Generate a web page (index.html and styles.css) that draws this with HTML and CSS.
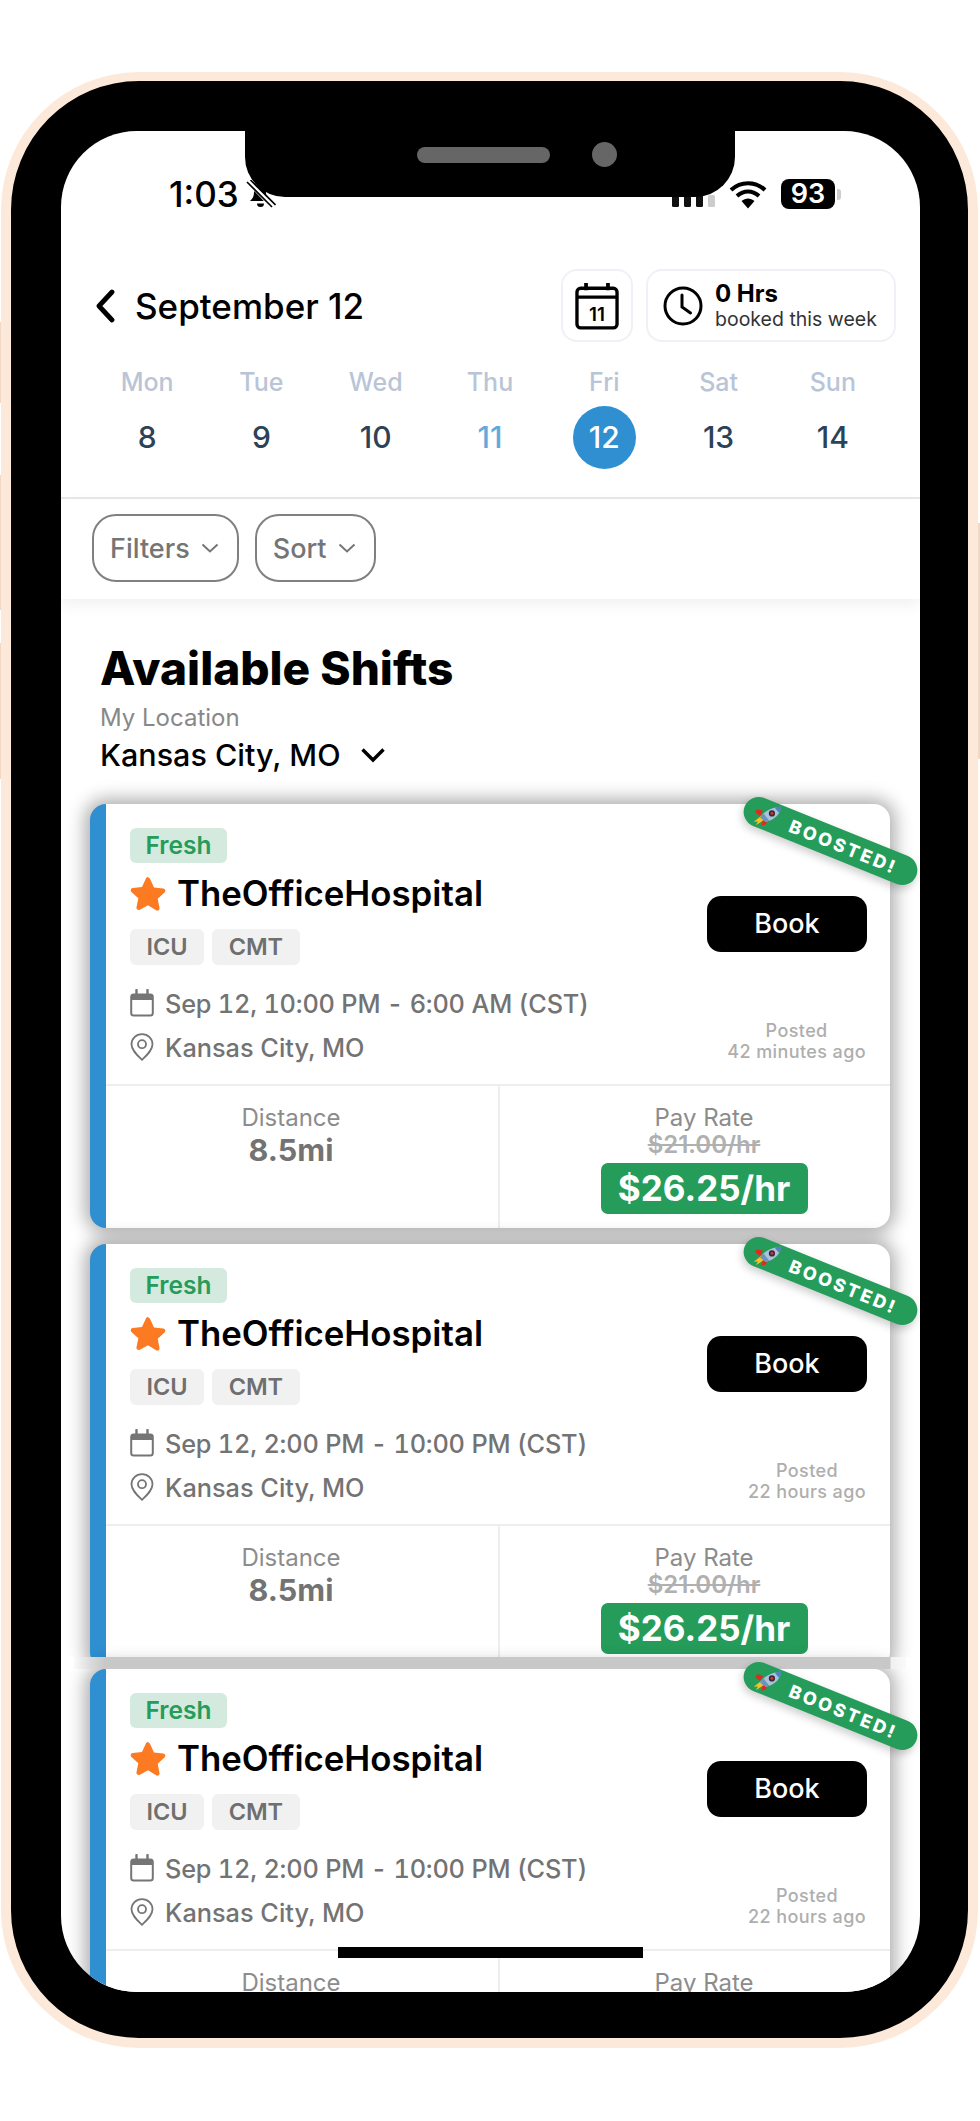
FILE: index.html
```html
<!DOCTYPE html>
<html lang="en">
<head>
    <meta charset="UTF-8">
    <meta name="viewport" content="width=device-width, initial-scale=1.0">
    <title>Available Shifts</title>
    <link rel="stylesheet" href="styles.css">
</head>
<body>
    <!-- shared icons -->
    <svg class="icon-sprites" width="0" height="0">
        <symbol id="i-star" viewBox="0 0 36 36">
            <path d="M18 2.500c1 0 1.700.6 2.100 1.500l3.900 8.500 9.200 1.100c2.100.3 2.800 2.500 1.300 3.900l-6.800 6.300 1.800 9.100c.4 2-1.600 3.400-3.400 2.400L18 30.200l-8.100 4.500c-1.800 1-3.800-.4-3.400-2.400l1.800-9.100-6.800-6.300c-1.500-1.400-.8-3.600 1.300-3.900l9.200-1.100 3.900-8.500c.4-.9 1.100-1.500 2.100-1.500z" fill="#fb7a22"/>
        </symbol>
        <symbol id="i-date" viewBox="0 0 24 28">
            <path d="M2 5.500h20a1 1 0 0 1 1 1V11H1V6.500a1 1 0 0 1 1-1z" fill="#757575"/>
            <rect x="1.200" y="5.500" width="21.600" height="21" rx="2.500" fill="none" stroke="#757575" stroke-width="2"/>
            <path d="M6.500 1v6M17.500 1v6" stroke="#757575" stroke-width="2.400" stroke-linecap="round"/>
        </symbol>
        <symbol id="i-pin" viewBox="0 0 24 28">
            <path d="M12 1.200C6 1.200 1.500 5.700 1.500 11.300c0 6 5.600 10.800 10.500 15.500 4.900-4.700 10.500-9.500 10.500-15.500C22.500 5.700 18 1.200 12 1.200z" fill="none" stroke="#757575" stroke-width="1.800" stroke-linejoin="round"/>
            <circle cx="12" cy="11.200" r="4" fill="none" stroke="#757575" stroke-width="1.800"/>
        </symbol>
        <symbol id="i-rocket" viewBox="0 0 28 20">
            <path d="M8 10 1 15.500l4-.3L3 19l7.500-5z" fill="#f6c026"/>
            <path d="M10 5 4 3.500 2.500 6.500 7 10zM14 13l-1 5-4.500 1.500 1-5z" fill="#e5281d"/>
            <path d="M7 11.500C11 5.500 18 1.500 27.500 1c-1 8-7.500 13-15 14.500z" fill="#a9c3dc"/>
            <path d="M21 1.800c2.200-.5 4.400-.8 6.500-.8-.2 2.200-.9 4.300-2 6.100z" fill="#4f82c0"/>
            <path d="M7 11.500c1-1.500 2.100-2.800 3.400-4l5.500 7C14.500 15 13.500 15.300 12.500 15.500z" fill="#6d93bd"/>
            <circle cx="18.500" cy="7.500" r="3" fill="#3a2a35"/>
            <circle cx="18.500" cy="7.500" r="1.400" fill="#d8323a"/>
        </symbol>
    </svg>

    <div class="phone">
        <span class="side-btn left-btn mute-btn"></span>
        <span class="side-btn left-btn vol-up-btn"></span>
        <span class="side-btn left-btn vol-down-btn"></span>
        <span class="side-btn power-btn"></span>

        <div class="screen">
            <div class="notch">
                <span class="speaker"></span>
                <span class="camera"></span>
            </div>

            <div class="status-bar">
                <div class="status-left">
                    <span class="clock">1:03</span>
                    <svg class="bell" width="30" height="28" viewBox="0 0 30 28">
                        <path d="M14 5c-4 0-6 3-6 7 0 4-1 6-4 9h20c-3-3-4-5-4-9 0-4-2-7-6-7z" fill="#000"/>
                        <path d="M11 23.500a3.500 3.500 0 0 0 7 0z" fill="#000"/>
                        <path d="M2 1l25 26" stroke="#fff" stroke-width="5"/>
                        <path d="M1 2l25 25M4.500 0l25 25" stroke="#000" stroke-width="1.600"/>
                    </svg>
                </div>
                <div class="status-right">
                    <svg class="signal" width="43" height="12" viewBox="0 0 43 12">
                        <rect x="0" y="0" width="7" height="12" rx="1.500" fill="#111"/>
                        <rect x="12" y="0" width="7" height="12" rx="1.500" fill="#111"/>
                        <rect x="24" y="0" width="7" height="12" rx="1.500" fill="#111"/>
                        <rect x="36" y="0" width="7" height="12" rx="1.500" fill="#ccc"/>
                    </svg>
                    <svg class="wifi" width="38" height="29" viewBox="0 0 38 29">
                        <path d="M2 10c10-9 24-9 34 0M8 16c7-6 15-6 22 0" fill="none" stroke="#000" stroke-width="4.200"/>
                        <path d="M12.500 21c4-3.400 9-3.400 13 0L19 28.500z" fill="#000"/>
                    </svg>
                    <div class="battery">
                        <span class="battery-level">93</span>
                        <span class="battery-nub"></span>
                    </div>
                </div>
            </div>

            <div class="top-bar">
                <div class="top-title">
                    <svg class="back" width="20" height="34" viewBox="0 0 20 34">
                        <path d="M17 3 4 17l13 14" fill="none" stroke="#000" stroke-width="4.800" stroke-linecap="round" stroke-linejoin="round"/>
                    </svg>
                    <span>September 12</span>
                </div>
                <div class="calendar-btn">
                    <svg width="44" height="48" viewBox="0 0 42 46">
                        <rect x="1.800" y="6" width="38.400" height="38" rx="3.500" fill="none" stroke="#000" stroke-width="3.200"/>
                        <path d="M1.800 14.500h38.400" stroke="#000" stroke-width="3"/>
                        <path d="M10.500 1v7M31.500 1v7" stroke="#000" stroke-width="3.600"/>
                        <text x="21" y="37" class="calendar-day">11</text>
                    </svg>
                </div>
                <div class="hours-btn">
                    <svg width="40" height="40" viewBox="0 0 40 40">
                        <circle cx="20" cy="20" r="18" fill="none" stroke="#000" stroke-width="3"/>
                        <path d="M19 9v12l8.500 6" fill="none" stroke="#000" stroke-width="3" stroke-linecap="round"/>
                    </svg>
                    <div class="hours-text">
                        <strong>0 Hrs</strong>
                        <span>booked this week</span>
                    </div>
                </div>
            </div>

            <div class="week">
                <div class="day"><span class="day-name">Mon</span><span class="day-num">8</span></div>
                <div class="day"><span class="day-name">Tue</span><span class="day-num">9</span></div>
                <div class="day"><span class="day-name">Wed</span><span class="day-num">10</span></div>
                <div class="day"><span class="day-name">Thu</span><span class="day-num today">11</span></div>
                <div class="day"><span class="day-name">Fri</span><span class="day-num selected">12</span></div>
                <div class="day"><span class="day-name">Sat</span><span class="day-num">13</span></div>
                <div class="day"><span class="day-name">Sun</span><span class="day-num">14</span></div>
            </div>

            <div class="filter-bar">
                <div class="filter-btn">Filters
                    <svg width="18" height="10" viewBox="0 0 18 10"><path d="M1.500 1.500 9 8.500l7.500-7" fill="none" stroke="#757575" stroke-width="2"/></svg>
                </div>
                <div class="filter-btn">Sort
                    <svg width="18" height="10" viewBox="0 0 18 10"><path d="M1.500 1.500 9 8.500l7.500-7" fill="none" stroke="#757575" stroke-width="2"/></svg>
                </div>
            </div>

            <div class="list-head">
                <h1>Available Shifts</h1>
                <div class="loc-label">My Location</div>
                <div class="loc-value">Kansas City, MO
                    <svg width="26" height="16" viewBox="0 0 26 16"><path d="M2.500 2.500 13 13 23.500 2.500" fill="none" stroke="#000" stroke-width="3.400"/></svg>
                </div>
            </div>

            <div class="shift-list">
                <div class="shift-card">
                    <div class="boosted">
                        <svg width="29" height="21"><use href="#i-rocket"/></svg>
                        <span>BOOSTED!</span>
                    </div>
                    <div class="card-top">
                        <div class="card-info">
                            <span class="fresh">Fresh</span>
                            <div class="facility">
                                <svg width="36" height="36"><use href="#i-star"/></svg>
                                <span>TheOfficeHospital</span>
                            </div>
                            <div class="tags"><span class="tag">ICU</span><span class="tag">CMT</span></div>
                            <div class="meta">
                                <svg width="24" height="28"><use href="#i-date"/></svg>
                                <span class="shift-time">Sep 12, 10:00 PM - 6:00 AM (CST)</span>
                            </div>
                            <div class="meta">
                                <svg width="24" height="28"><use href="#i-pin"/></svg>
                                <span>Kansas City, MO</span>
                            </div>
                        </div>
                        <div class="card-side">
                            <div class="book">Book</div>
                            <div class="posted">Posted<br>42 minutes ago</div>
                        </div>
                    </div>
                    <div class="card-bottom">
                        <div class="stat distance">
                            <span class="stat-label">Distance</span>
                            <span class="stat-value">8.5mi</span>
                        </div>
                        <div class="stat pay">
                            <span class="stat-label">Pay Rate</span>
                            <s class="old-rate">$21.00/hr</s>
                            <span class="new-rate">$26.25/hr</span>
                        </div>
                    </div>
                </div>

                <div class="shift-card cut-off">
                    <div class="boosted">
                        <svg width="29" height="21"><use href="#i-rocket"/></svg>
                        <span>BOOSTED!</span>
                    </div>
                    <div class="card-top">
                        <div class="card-info">
                            <span class="fresh">Fresh</span>
                            <div class="facility">
                                <svg width="36" height="36"><use href="#i-star"/></svg>
                                <span>TheOfficeHospital</span>
                            </div>
                            <div class="tags"><span class="tag">ICU</span><span class="tag">CMT</span></div>
                            <div class="meta">
                                <svg width="24" height="28"><use href="#i-date"/></svg>
                                <span class="shift-time">Sep 12, 2:00 PM - 10:00 PM (CST)</span>
                            </div>
                            <div class="meta">
                                <svg width="24" height="28"><use href="#i-pin"/></svg>
                                <span>Kansas City, MO</span>
                            </div>
                        </div>
                        <div class="card-side">
                            <div class="book">Book</div>
                            <div class="posted">Posted<br>22 hours ago</div>
                        </div>
                    </div>
                    <div class="card-bottom">
                        <div class="stat distance">
                            <span class="stat-label">Distance</span>
                            <span class="stat-value">8.5mi</span>
                        </div>
                        <div class="stat pay">
                            <span class="stat-label">Pay Rate</span>
                            <s class="old-rate">$21.00/hr</s>
                            <span class="new-rate">$26.25/hr</span>
                        </div>
                    </div>
                </div>

                <div class="seam"></div>

                <div class="shift-card">
                    <div class="boosted">
                        <svg width="29" height="21"><use href="#i-rocket"/></svg>
                        <span>BOOSTED!</span>
                    </div>
                    <div class="card-top">
                        <div class="card-info">
                            <span class="fresh">Fresh</span>
                            <div class="facility">
                                <svg width="36" height="36"><use href="#i-star"/></svg>
                                <span>TheOfficeHospital</span>
                            </div>
                            <div class="tags"><span class="tag">ICU</span><span class="tag">CMT</span></div>
                            <div class="meta">
                                <svg width="24" height="28"><use href="#i-date"/></svg>
                                <span class="shift-time">Sep 12, 2:00 PM - 10:00 PM (CST)</span>
                            </div>
                            <div class="meta">
                                <svg width="24" height="28"><use href="#i-pin"/></svg>
                                <span>Kansas City, MO</span>
                            </div>
                        </div>
                        <div class="card-side">
                            <div class="book">Book</div>
                            <div class="posted">Posted<br>22 hours ago</div>
                        </div>
                    </div>
                    <div class="card-bottom">
                        <div class="stat distance">
                            <span class="stat-label">Distance</span>
                            <span class="stat-value">8.5mi</span>
                        </div>
                        <div class="stat pay">
                            <span class="stat-label">Pay Rate</span>
                            <s class="old-rate">$21.00/hr</s>
                            <span class="new-rate">$26.25/hr</span>
                        </div>
                    </div>
                </div>
            </div>

            <div class="home-bar"></div>
        </div>
    </div>
</body>
</html>
```

FILE: styles.css
```css
* {
    box-sizing: border-box;
}

body {
    margin: 0;
    height: 2121px;
    overflow: hidden;
    background-color: #fff;
    font-family: Inter, "Liberation Sans", sans-serif;
    color: #000;
}

.icon-sprites {
    display: block;
    height: 0;
}

/* Phone frame */
.phone {
    position: relative;
    width: 977px;
    height: 1976px;
    margin: 72px 0 0 1px;
    padding: 50px 48px 46px 50px;
    background-color: #000;
    border: 10px solid #fde9d9;
    border-top-width: 9px;
    border-radius: 138px;
}

.side-btn {
    position: absolute;
    background-color: #f2d9c6;
}

.left-btn {
    left: -11px;
    width: 1px;
}

.mute-btn {
    top: 241px;
    height: 81px;
}

.vol-up-btn {
    top: 394px;
    height: 135px;
}

.vol-down-btn {
    top: 562px;
    height: 136px;
}

.power-btn {
    top: 442px;
    right: -13px;
    width: 3px;
    height: 236px;
}

.screen {
    position: relative;
    height: 100%;
    overflow: hidden;
    background-color: #fff;
    border-radius: 76px;
}

.notch {
    position: absolute;
    top: 0;
    left: 184px;
    z-index: 5;
    width: 490px;
    height: 66px;
    background-color: #000;
    border-radius: 0 0 40px 40px;
}

.speaker {
    position: absolute;
    top: 16px;
    left: 172px;
    width: 133px;
    height: 16px;
    background-color: #666;
    border-radius: 8px;
}

.camera {
    position: absolute;
    top: 11px;
    left: 347px;
    width: 25px;
    height: 25px;
    background-color: #666;
    border-radius: 50%;
}

.home-bar {
    position: absolute;
    bottom: 34px;
    left: 277px;
    z-index: 5;
    width: 305px;
    height: 11px;
    background-color: #000;
}

/* Status bar */
.status-bar {
    display: flex;
    justify-content: space-between;
    align-items: center;
    height: 30px;
    margin-top: 48px;
    padding: 0 79px 0 108px;
}

.status-left {
    display: flex;
    align-items: center;
    gap: 7px;
}

.clock {
    font-size: 35px;
    font-weight: 500;
    line-height: 30px;
}

.status-right {
    display: flex;
    align-items: flex-end;
    gap: 14px;
}

.signal {
    margin-bottom: 2px;
}

.battery {
    display: flex;
    align-items: center;
    gap: 2px;
}

.battery-level {
    width: 54px;
    height: 30px;
    background-color: #000;
    color: #fff;
    font-size: 27px;
    font-weight: 600;
    line-height: 30px;
    text-align: center;
    border-radius: 8px;
}

.battery-nub {
    width: 4px;
    height: 11px;
    background-color: #ccc;
    border-radius: 0 3px 3px 0;
}

/* Header */
.top-bar {
    display: flex;
    align-items: center;
    height: 73px;
    margin-top: 60px;
    padding: 0 24px 0 34px;
}

.top-title {
    display: flex;
    flex: 1;
    align-items: center;
    gap: 20px;
    font-size: 35px;
    font-weight: 500;
}

.calendar-btn,
.hours-btn {
    display: flex;
    align-items: center;
    height: 73px;
    background-color: #fff;
    border: 2px solid #f0f1f6;
    border-radius: 16px;
}

.calendar-btn {
    justify-content: center;
    width: 72px;
    margin-right: 13px;
}

.calendar-day {
    font-family: Inter, sans-serif;
    font-size: 18px;
    font-weight: 600;
    text-anchor: middle;
}

.hours-btn {
    gap: 12px;
    width: 250px;
    padding-left: 15px;
}

.hours-text {
    display: flex;
    flex-direction: column;
    padding-top: 2px;
}

.hours-text strong {
    font-size: 24px;
    font-weight: 700;
    line-height: 26px;
}

.hours-text span {
    font-size: 19.500px;
    line-height: 25px;
    color: #333;
}

/* Week strip */
.week {
    display: grid;
    grid-template-columns: repeat(7, 1fr);
    padding: 25px 30px 28px 29px;
    border-bottom: 2px solid #e6e8ec;
}

.day {
    display: flex;
    flex-direction: column;
    align-items: center;
}

.day-name {
    height: 30px;
    margin-bottom: 9px;
    color: #b9c5d6;
    font-size: 25px;
    font-weight: 500;
    line-height: 30px;
}

.day-num {
    width: 63px;
    height: 63px;
    color: #2d4256;
    font-size: 30px;
    font-weight: 500;
    line-height: 63px;
    text-align: center;
}

.today {
    color: #62aadd;
}

.selected {
    background-color: #2f8fd0;
    color: #fff;
    border-radius: 50%;
}

/* Filters */
.filter-bar {
    position: relative;
    display: flex;
    gap: 16px;
    height: 100px;
    padding: 15px 0 0 31px;
    background-color: #fff;
    box-shadow: 0 6px 14px rgba(0, 0, 0, 0.06);
}

.filter-btn {
    display: flex;
    align-items: center;
    gap: 11px;
    height: 68px;
    padding: 0 18px 0 16px;
    color: #757575;
    font-size: 27px;
    font-weight: 500;
    border: 2px solid #808080;
    border-radius: 24px;
}

/* List heading */
.list-head {
    padding: 44px 0 0 39px;
}

.list-head h1 {
    margin: 0;
    font-size: 46px;
    font-weight: 800;
    line-height: 50px;
}

.loc-label {
    margin-top: 11px;
    color: #888;
    font-size: 24px;
    line-height: 28px;
}

.loc-value {
    display: flex;
    align-items: center;
    gap: 19px;
    margin-top: 3px;
    font-size: 30.500px;
    font-weight: 500;
    line-height: 40px;
}

/* Shift cards */
.shift-list {
    display: flex;
    flex-direction: column;
    gap: 16px;
    margin-top: 29px;
    padding: 0 30px 0 29px;
}

.shift-card {
    position: relative;
    flex-shrink: 0;
    height: 424px;
    background-color: #fff;
    border-left: 16px solid #2f8fd0;
    border-radius: 16px;
    box-shadow: 0 0 18px 5px rgba(0, 0, 0, 0.33);
}

/* second card is cut short where the screenshots were stitched */
.cut-off {
    margin-bottom: -11px;
    clip-path: inset(-40px -40px 11px -40px);
}

.seam {
    position: relative;
    z-index: 1;
    height: 12px;
    margin: -16px -16px;
    background: linear-gradient(to right, #fafafa, #dcdcdc 16px, #c8c8c8 31px, #c8c8c8 calc(100% - 16px), #f0f0f0 calc(100% - 15px), #fafafa);
}

.boosted {
    position: absolute;
    top: 22px;
    right: -33px;
    z-index: 2;
    display: flex;
    align-items: center;
    gap: 10px;
    width: 185px;
    height: 30px;
    padding-left: 10px;
    background-color: #259c5a;
    color: #fff;
    font-size: 18px;
    font-weight: 800;
    letter-spacing: 2.600px;
    white-space: nowrap;
    border-radius: 15px;
    box-shadow: 0 4px 8px rgba(0, 0, 0, 0.2);
    transform: rotate(22deg);
}

.boosted svg {
    flex-shrink: 0;
    transform: rotate(-22deg);
}

.card-top {
    display: flex;
    justify-content: space-between;
    height: 282px;
    padding: 24px 23px 0 24px;
    border-bottom: 2px solid #eeeeee;
}

.card-info {
    display: flex;
    flex-direction: column;
    align-items: flex-start;
}

.fresh {
    width: 97px;
    height: 35px;
    background-color: #d4eadf;
    color: #259c5a;
    font-size: 24.500px;
    font-weight: 600;
    line-height: 35px;
    text-align: center;
    border-radius: 6px;
}

.facility {
    display: flex;
    align-items: center;
    gap: 11px;
    height: 44px;
    margin-top: 8px;
    font-size: 34.800px;
    font-weight: 600;
}

.tags {
    display: flex;
    gap: 8px;
    margin-top: 14px;
}

.tag {
    height: 36px;
    padding: 0 16.500px;
    background-color: #f1f1f1;
    color: #6f6f6f;
    font-size: 23.500px;
    font-weight: 600;
    line-height: 36px;
    border-radius: 6px;
}

.meta {
    display: flex;
    align-items: center;
    gap: 11px;
    height: 34px;
    margin-top: 10px;
    color: #737373;
    font-size: 25.300px;
    font-weight: 500;
}

.tags + .meta {
    margin-top: 21px;
}

.shift-time {
    font-variant-numeric: tabular-nums;
    letter-spacing: -0.200px;
}

.card-side {
    display: flex;
    flex-direction: column;
    align-items: flex-end;
}

.book {
    width: 160px;
    height: 56px;
    margin-top: 68px;
    background-color: #000;
    color: #fff;
    font-size: 27px;
    font-weight: 500;
    line-height: 56px;
    text-align: center;
    border-radius: 14px;
}

.posted {
    margin-top: 68px;
    margin-right: 1px;
    color: #aeaeae;
    font-size: 18px;
    font-weight: 500;
    line-height: 21px;
    letter-spacing: 0.400px;
    text-align: center;
}

.card-bottom {
    display: grid;
    grid-template-columns: 392px 1fr;
    height: 142px;
}

.stat {
    display: flex;
    flex-direction: column;
    align-items: center;
    padding-top: 17px;
}

.distance {
    padding-right: 22px;
}

.pay {
    padding-left: 18px;
    border-left: 2px solid #eeeeee;
}

.stat-label {
    color: #8c8c8c;
    font-size: 24px;
    line-height: 30px;
}

.stat-value {
    color: #737373;
    font-size: 30.500px;
    font-weight: 700;
    line-height: 34px;
}

.old-rate {
    color: #b0b0b0;
    font-size: 24px;
    font-weight: 600;
    line-height: 24px;
}

.new-rate {
    width: 207px;
    height: 51px;
    margin-top: 6px;
    background-color: #259c5a;
    color: #fff;
    font-size: 35px;
    font-weight: 700;
    line-height: 51px;
    text-align: center;
    border-radius: 7px;
}
```
